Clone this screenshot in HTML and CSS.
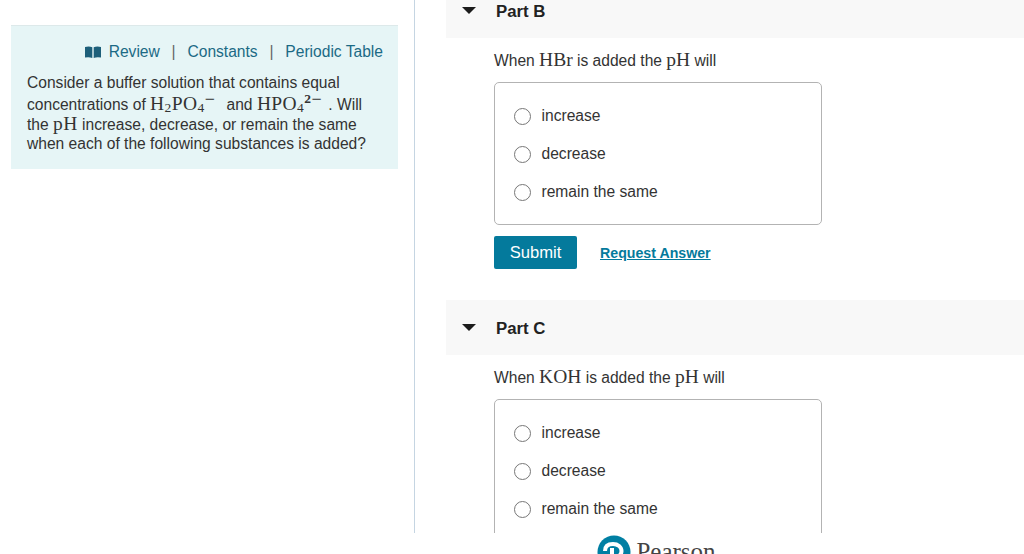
FILE: index.html
```html
<!DOCTYPE html>
<html lang="en">
<head>
  <meta charset="UTF-8" />
  <title>Part B</title>
  <link rel="stylesheet" href="styles.css">
</head>
<body>

  <div class="main">
    <!-- Left pane -->
    <div class="left">
      <div class="intro">
        <div class="links">
          <svg class="book" width="16" height="12" viewBox="0 0 16 12">
            <path d="M0 1 Q4 0 7.300 1.200 V12 Q4 10.800 0 11.600 Z M16 1 Q12 0 8.700 1.200 V12 Q12 10.800 16 11.600 Z" />
          </svg>
          <a class="link">Review</a><span class="sep">|</span><a class="link">Constants</a><span class="sep">|</span><a class="link">Periodic Table</a>
        </div>
        <p class="intro-text">Consider a buffer solution that contains equal
          <span class="line-tall">concentrations of <span class="math">H<sub>2</sub>PO<sub>4</sub><sup><span class="minus minus-wide">&minus;</span></sup></span> and <span class="math">HPO<sub>4</sub><sup>2<span class="minus">&minus;</span></sup></span> . Will</span>
          the <span class="math">pH</span> increase, decrease, or remain the same<br>
          when each of the following substances is added?</p>
      </div>
    </div>

    <!-- Right pane -->
    <div class="right">
      <div class="scroll">
        <div class="part">
          <div class="part-head"><span class="arrow"></span><span class="part-title">Part B</span></div>
          <div class="part-body">
            <p class="question">When <span class="math">HBr</span> is added the <span class="math">pH</span> will</p>
            <div class="options">
              <label class="option"><span class="radio"></span>increase</label>
              <label class="option"><span class="radio"></span>decrease</label>
              <label class="option"><span class="radio"></span>remain the same</label>
            </div>
            <div class="actions">
              <button class="submit">Submit</button>
              <a class="request">Request Answer</a>
            </div>
          </div>
        </div>

        <div class="part">
          <div class="part-head"><span class="arrow"></span><span class="part-title">Part C</span></div>
          <div class="part-body">
            <p class="question">When <span class="math">KOH</span> is added the <span class="math">pH</span> will</p>
            <div class="options">
              <label class="option"><span class="radio"></span>increase</label>
              <label class="option"><span class="radio"></span>decrease</label>
              <label class="option"><span class="radio"></span>remain the same</label>
            </div>
          </div>
        </div>
      </div>
    </div>
  </div>

  <!-- Footer, cut off by the window -->
  <div class="footer">
    <svg class="logo" width="34" height="34" viewBox="0 0 34 34">
      <circle cx="17" cy="17" r="16.500" fill="#007fa3" />
      <path d="M8 16 C8 10.500 12 9 16 9 C21 9 24.500 12 24.500 16 C24.500 20 21 22.500 17.500 22.500 M15 13 V26" fill="none" stroke="#fff" stroke-width="4" />
    </svg>
    <span class="brand">Pearson</span>
  </div>

</body>
</html>
```

FILE: styles.css
```css
html, body {
  margin: 0;
  height: 554px;
  overflow: hidden;
}

body {
  font-family: "Liberation Sans", Arial, sans-serif;
  font-size: 15.600px;
  color: #333;
  background: #fff;
}

.main {
  display: flex;
  height: 533px;
  overflow: hidden;
}

.left {
  width: 415px;
  flex: none;
  box-sizing: border-box;
  border-right: 1px solid #c5d5e2;
  padding: 25px 16px 0 11px;
}

.intro {
  background: #e6f5f6;
  border-top: 1px solid #dde9ea;
  height: 144px;
  box-sizing: border-box;
  padding: 17px 15px 0 16px;
}

.links {
  display: flex;
  align-items: center;
  justify-content: flex-end;
  height: 18px;
}

.book {
  fill: #1d5f7a;
  margin-right: 8px;
}

.link {
  color: #1b6a85;
}

.sep {
  color: #666;
  margin: 0 11.800px;
}

.intro-text {
  margin: 12px 0 0;
  line-height: 19.500px;
}

.line-tall {
  display: block;
  margin-top: 2.500px;
}

.math {
  font-family: "Liberation Serif", "Times New Roman", serif;
  font-size: 19.500px;
  line-height: 0;
}

.intro-text .math {
  letter-spacing: 0.400px;
}

.math sub, .math sup {
  font-size: 13.500px;
  line-height: 0;
}

.math sub {
  vertical-align: -2px;
}

.math sup {
  vertical-align: 7px;
  font-weight: bold;
}

.minus {
  margin-right: 2px;
  font-size: 18px;
  font-weight: normal;
  vertical-align: -2px;
  line-height: 0;
}

.minus-wide {
  margin-right: 7px;
}

.right {
  flex: 1;
  padding-left: 31px;
  overflow: hidden;
}

/* the pane is scrolled down a little in the screenshot */
.scroll {
  margin-top: -17px;
}

.part-head {
  display: flex;
  align-items: center;
  height: 55px;
  background: #f8f8f8;
}

.arrow {
  width: 0;
  height: 0;
  margin-left: 16px;
  border-left: 7px solid transparent;
  border-right: 7px solid transparent;
  border-top: 7px solid #1c1c1c;
}

.part-title {
  margin-left: 20px;
  padding-top: 2px;
  font-size: 16.800px;
  font-weight: bold;
  color: #222;
}

.part-body {
  padding: 0 0 31px 48px;
}

.question {
  margin: 0;
  padding-top: 12px;
  line-height: 21px;
}

.options {
  width: 328px;
  height: 143px;
  box-sizing: border-box;
  margin-top: 11px;
  padding-top: 14px;
  border: 1px solid #b3b3b3;
  border-radius: 5px;
}

.option {
  display: flex;
  align-items: center;
  height: 38px;
  padding-left: 19px;
}

.radio {
  width: 15px;
  height: 15px;
  margin-right: 10.500px;
  border: 1.500px solid #777;
  border-radius: 50%;
  background: #fff;
}

.actions {
  display: flex;
  align-items: center;
  margin-top: 11px;
}

.submit {
  width: 83px;
  height: 33px;
  padding: 0;
  border: none;
  border-radius: 2px;
  background: #047a9c;
  color: #fff;
  font-family: inherit;
  font-size: 16.600px;
}

.request {
  margin-left: 23px;
  color: #047a9c;
  font-size: 14.200px;
  font-weight: bold;
  text-decoration: underline;
}

.footer {
  display: flex;
  justify-content: center;
  height: 19px;
  overflow: hidden;
  padding: 2px 0 0 0;
  margin-left: 289px;
}

.logo {
  flex: none;
}

.brand {
  margin-left: 5px;
  font-family: "Liberation Serif", "Times New Roman", serif;
  font-size: 25px;
  line-height: 34px;
  color: #444;
}
```
